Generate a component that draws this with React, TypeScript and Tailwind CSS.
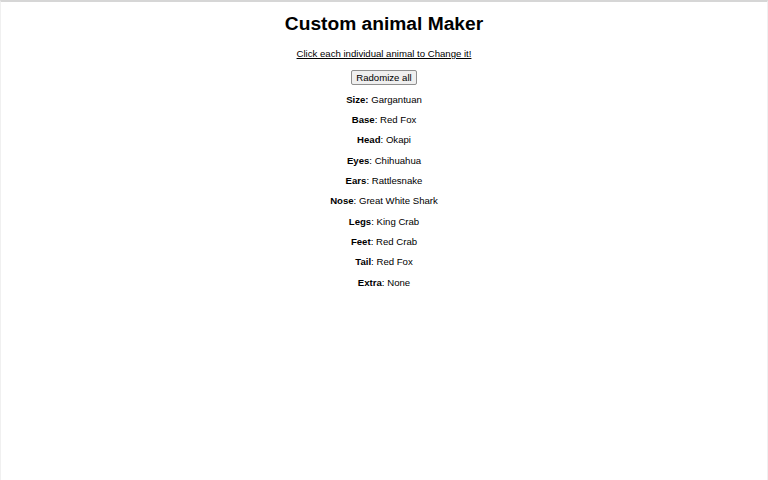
const traits: [string, string][] = [
  ["Size", "Gargantuan"],
  ["Base", "Red Fox"],
  ["Head", "Okapi"],
  ["Eyes", "Chihuahua"],
  ["Ears", "Rattlesnake"],
  ["Nose", "Great White Shark"],
  ["Legs", "King Crab"],
  ["Feet", "Red Crab"],
  ["Tail", "Red Fox"],
  ["Extra", "None"],
];

export default function App() {
  return (
    <div
      className="h-[480px] border-t-2 border-x border-t-[#d6d6d6] border-x-[#f0f0f0] bg-white text-black text-center text-[9.6px]"
      style={{ fontFamily: '"Liberation Sans", Arial, sans-serif' }}
    >
      <h1 className="text-[19.2px] font-bold leading-[22px] mt-[11px] mb-[13px]">Custom animal Maker</h1>
      <p className="my-[9.6px] leading-[11px]">
        <a href="#" className="underline">
          Click each individual animal to Change it!
        </a>
      </p>
      <button className="h-[15px] px-[4px] leading-[13px] text-[9.6px] bg-[#efefef] border border-[#8f8f8f] rounded-[2px] mt-[1px]">
        Radomize all
      </button>
      <div className="mt-[3px]">
        {traits.map(([label, value], i) => (
          <p key={label} className="my-[9.6px] leading-[10.75px]">
            {i === 0 ? <b>{label}:</b> : <><b>{label}</b>:</>} {value}
          </p>
        ))}
      </div>
    </div>
  );
}
